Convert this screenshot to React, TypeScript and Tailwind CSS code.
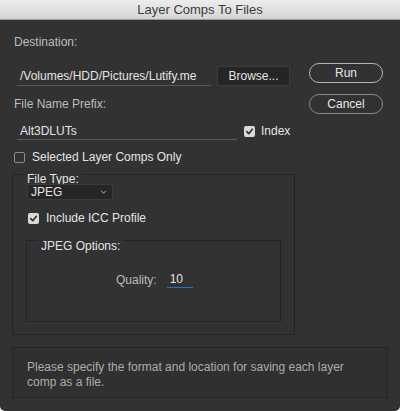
function Check({ checked }: { checked: boolean }) {
  return checked ? (
    <span className="flex h-[11px] w-[11px] items-center justify-center rounded-[2px] bg-[#d9d9d9]">
      <svg viewBox="0 0 10 10" className="h-[9px] w-[9px]">
        <path d="M2 5.2 L4.2 7.4 L8.2 2.6" fill="none" stroke="#2e2e2e" strokeWidth="1.8" strokeLinecap="round" strokeLinejoin="round" />
      </svg>
    </span>
  ) : (
    <span className="block h-[11px] w-[11px] rounded-[2px] border border-[#8c8c8c]" />
  )
}

export default function App() {
  return (
    <div className="h-[411px] w-[400px] bg-white" style={{ fontFamily: '"Liberation Sans", Arial, sans-serif' }}>
      <div className="flex h-[411px] w-[400px] flex-col overflow-hidden rounded-b-[5px] bg-[#323232] text-[12px] leading-[14px]">
        <div className="flex h-[20px] shrink-0 items-center justify-center border-b border-[#9a9a9a] bg-gradient-to-b from-[#ededed] to-[#d5d5d5] text-[13px] text-[#3c3c3c]">
          Layer Comps To Files
        </div>

        <div className="flex px-[12px]">
          <div className="w-[283px]">
            <div className="ml-[2px] mt-[15px] text-[#bdbdbd]">Destination:</div>
            <div className="mt-[17px] flex h-[20px] items-stretch">
              <div className="ml-[5px] flex w-[194px] items-center border-b border-[#5a5a5a] pl-[3px] text-[#e4e4e4]">
                /Volumes/HDD/Pictures/Lutify.me
              </div>
              <button className="ml-[6px] w-[73px] border border-[#3c3c3c] bg-[#252525] text-[#e4e4e4]">Browse...</button>
            </div>
            <div className="ml-[2px] mt-[11px] text-[#bdbdbd]">File Name Prefix:</div>
            <div className="mt-[11px] flex h-[18px] items-center">
              <div className="ml-[5px] flex h-[18px] w-[220px] items-center border-b border-[#5a5a5a] pl-[3px] text-[#e4e4e4]">
                Alt3DLUTs
              </div>
              <div className="ml-[7px] flex items-center gap-[6px] text-[#e4e4e4]">
                <Check checked />
                <span>Index</span>
              </div>
            </div>
            <div className="mt-[10px] flex items-center gap-[7px] pl-[2px] text-[#e4e4e4]">
              <Check checked={false} />
              <span>Selected Layer Comps Only</span>
            </div>

            <div className="relative mt-[10px] border border-[#242424] pb-[12px] pl-[14px] pr-[13px] pt-[9px]">
              <span className="absolute left-[11px] top-[-3px] bg-[#323232] px-[3px] text-[#e4e4e4]">File Type:</span>
              <div className="relative flex h-[16px] w-[86px] items-center justify-between rounded-[2px] border border-[#3c3c3c] bg-[#262626] pl-[3px] pr-[5px] text-[#e4e4e4]">
                <span>JPEG</span>
                <svg viewBox="0 0 8 5" className="h-[4px] w-[7px]">
                  <path d="M1 1 L4 4 L7 1" fill="none" stroke="#bdbdbd" strokeWidth="1.2" />
                </svg>
              </div>
              <div className="ml-[1px] mt-[11px] flex items-center gap-[7px] text-[#e4e4e4]">
                <Check checked />
                <span>Include ICC Profile</span>
              </div>
              <div className="relative -ml-[1px] mt-[15px] h-[82px] border border-[#242424]">
                <span className="absolute left-[11px] top-[-2px] bg-[#323232] px-[3px] text-[#e4e4e4]">JPEG Options:</span>
                <div className="mt-[30px] flex items-center">
                  <span className="ml-[89px] text-[#bdbdbd]">Quality:</span>
                  <div className="ml-[10px] flex h-[17px] w-[26px] items-center border-b border-[#2a6fc9] pl-[3px] text-[#e4e4e4]">10</div>
                </div>
              </div>
            </div>
          </div>

          <div className="ml-[14px] mt-[43px] flex w-[74px] flex-col gap-[11px]">
            <button className="h-[20px] rounded-[10px] border border-[#b4b4b4] text-[#e8e8e8]">Run</button>
            <button className="h-[20px] rounded-[10px] border border-[#8a8a8a] text-[#e8e8e8]">Cancel</button>
          </div>
        </div>

        <div className="mx-[12px] mt-[12px] h-[51px] border border-[#262626] bg-[#303030] px-[14px] pt-[12px] leading-[14.5px] text-[#acacac]">
          Please specify the format and location for saving each layer comp as a file.
        </div>
      </div>
    </div>
  )
}
